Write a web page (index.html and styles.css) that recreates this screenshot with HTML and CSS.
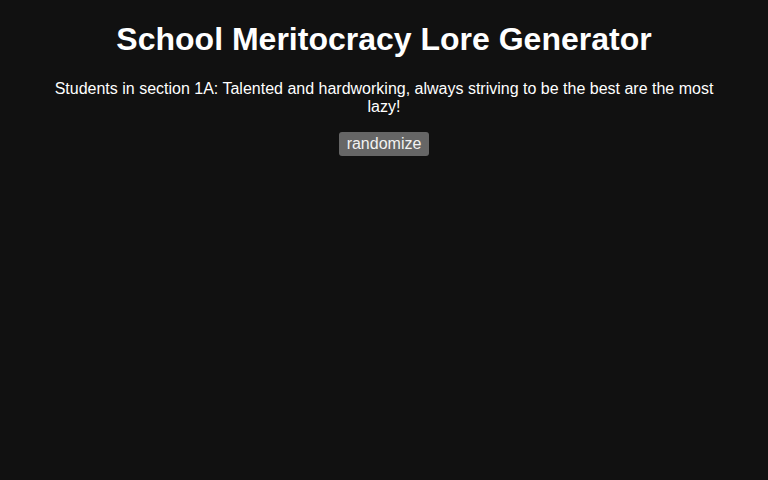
FILE: index.html
```html
<!DOCTYPE html>
<html lang="en">
<head>
    <meta charset="UTF-8">
    <meta name="viewport" content="width=device-width, initial-scale=1.0">
    <title>School Meritocracy Lore Generator</title>
    <link rel="stylesheet" href="styles.css">
</head>
<body>
    <div class="container">
        <h1>School Meritocracy Lore Generator</h1>
        <p id="lore">Students in section 1A: Talented and hardworking, always striving to be the best are the most lazy!</p>
        <button id="randomize-btn">randomize</button>
    </div>
</body>
</html>
```

FILE: styles.css
```css
body {
    font-family: "Liberation Sans", Arial, sans-serif;
    margin: 0;
    padding: 0 8px;
    background-color: #111111;
    color: white;
}
.container {
    max-width: 680px;
    margin: 0 auto;
    text-align: center;
}
h1 {
    font-size: 32px;
}
p {
    font-size: 16px;
}
button {
    font-family: inherit;
    font-size: 16px;
    padding: 3px 8px;
    background-color: #666666;
    color: #f2f2f2;
    border: none;
    border-radius: 3px;
    cursor: pointer;
}
```
